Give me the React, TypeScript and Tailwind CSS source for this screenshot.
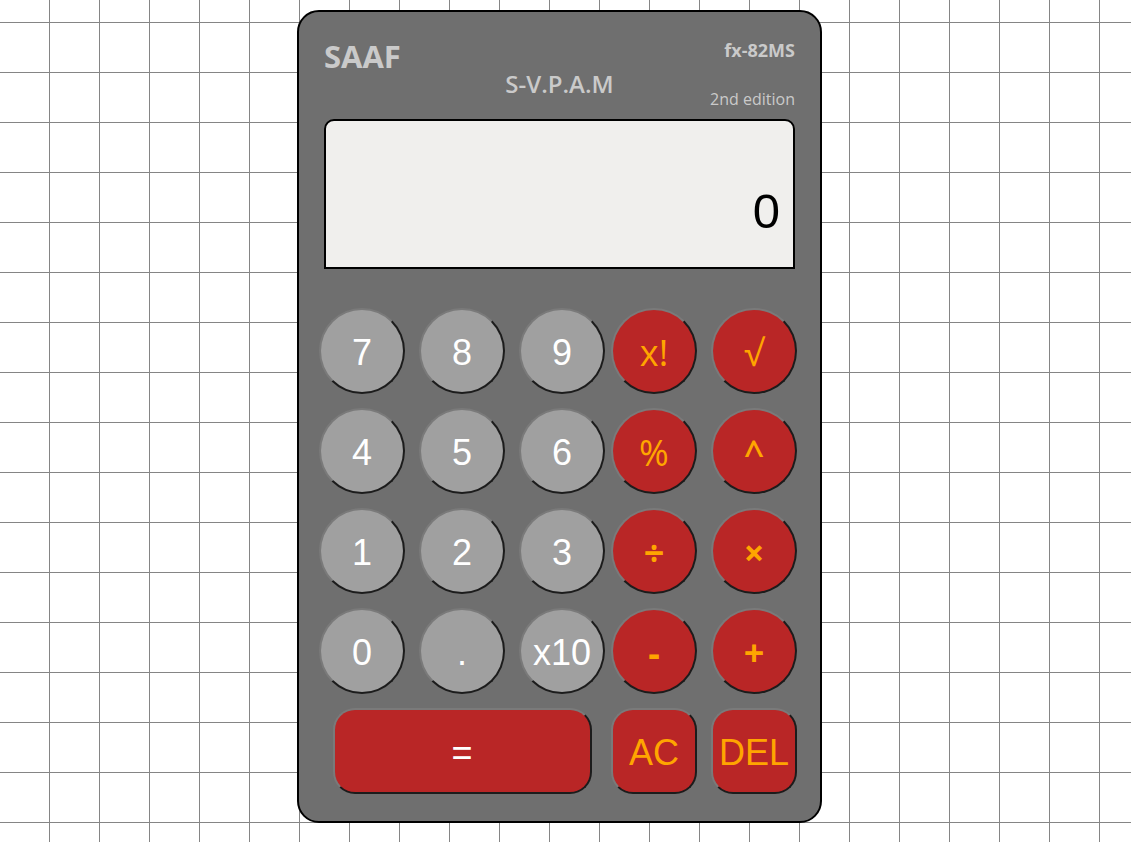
import React from "react";

const DIGITS = ["7", "8", "9", "4", "5", "6", "1", "2", "3", "0", ".", "x10"];
const OPS = [
  { label: "x!", weight: "font-medium" },
  { label: "√", weight: "font-normal" },
  { label: "%", weight: "font-medium" },
  { label: "^", weight: "font-semibold" },
  { label: "÷", weight: "font-bold" },
  { label: "×", weight: "font-bold" },
  { label: "-", weight: "font-bold" },
  { label: "+", weight: "font-bold" },
];

const keyBase =
  "flex items-center justify-center pt-[4px] border-2 border-t-[#7a7a7a] border-l-[#7a7a7a] border-r-[#1c1c1c] border-b-[#1c1c1c] font-['Liberation_Sans',Arial,sans-serif] select-none";

function DigitKey({ label }: { label: string }) {
  return (
    <button className={`${keyBase} h-[86px] w-[86px] rounded-full bg-[#a0a0a0] text-[36px] text-white`}>
      {label}
    </button>
  );
}

function OpKey({ label, weight }: { label: string; weight: string }) {
  return (
    <button
      className={`${keyBase} h-[86px] w-[86px] rounded-full bg-[#b92626] font-['Open_Sans',sans-serif] text-[36px] ${weight} text-[#ffa500]`}
    >
      {label}
    </button>
  );
}

export default function App() {
  return (
    <div className="min-h-screen w-full bg-white bg-[linear-gradient(to_right,#858585_1px,transparent_1px),linear-gradient(to_bottom,#858585_1px,transparent_1px)] bg-[size:50px_50px] bg-[position:49px_22px] pt-[10px]">
      <div className="ml-[297px] w-[525px] rounded-[22px] border-2 border-black bg-[#6f6f6f] px-[25px] pb-[27px] font-['Open_Sans',sans-serif] text-[#cacaca]">
        {/* header */}
        <div className="grid grid-cols-[1fr_auto_1fr] pt-[28px]">
          <div className="pt-[1px] text-[31px] font-bold leading-none">SAAF</div>
          <div className="pt-[32px] text-[24px] font-semibold leading-none">S-V.P.A.M</div>
          <div className="flex flex-col items-end pt-[1px]">
            <span className="text-[18px] font-bold leading-none">fx-82MS</span>
            <span className="mt-[32px] text-[16px] leading-none">2nd edition</span>
          </div>
        </div>

        {/* display */}
        <div className="mt-[12px] flex h-[150px] items-end justify-end rounded-t-[10px] border-2 border-black bg-[#f0efed] pb-[31px] pr-[13px]">
          <span className="font-['Liberation_Sans',Arial,sans-serif] text-[49px] leading-none text-black">0</span>
        </div>

        {/* keys */}
        <div className="-ml-[5px] mt-[39px] flex w-[478px] gap-[6px]">
          <div className="grid grid-cols-[86px_86px_86px] gap-[14px]">
            {DIGITS.map((d) => (
              <DigitKey key={d} label={d} />
            ))}
            <button
              className={`${keyBase} col-span-3 h-[86px] w-[259px] justify-self-center rounded-[22px] bg-[#b92626] text-[36px] text-white`}
            >
              =
            </button>
          </div>
          <div className="grid grid-cols-[86px_86px] gap-[14px]">
            {OPS.map((o) => (
              <OpKey key={o.label} label={o.label} weight={o.weight} />
            ))}
            <button className={`${keyBase} h-[86px] w-[86px] rounded-[22px] bg-[#b92626] text-[36px] text-[#ffa500]`}>
              AC
            </button>
            <button className={`${keyBase} h-[86px] w-[86px] rounded-[22px] bg-[#b92626] text-[36px] text-[#ffa500]`}>
              DEL
            </button>
          </div>
        </div>
      </div>
    </div>
  );
}
